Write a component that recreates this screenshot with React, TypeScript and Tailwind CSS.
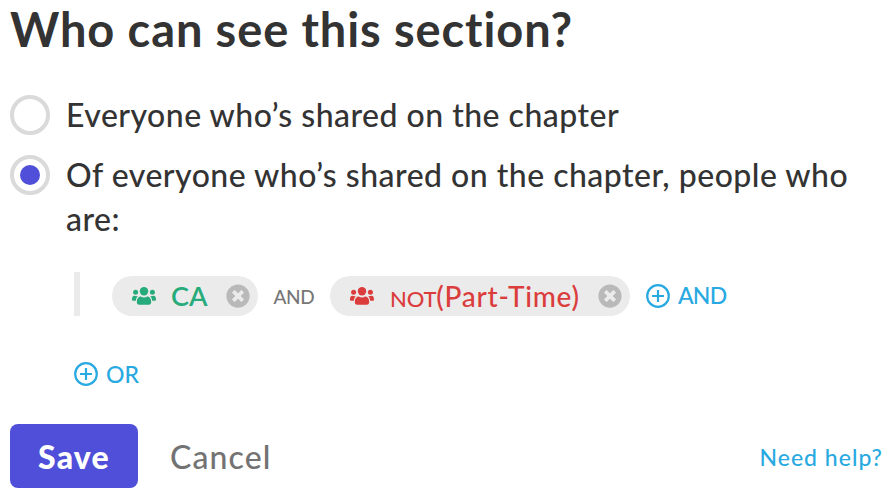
import { useState } from 'react'
import type { ReactNode } from 'react'
import { FaTimesCircle } from 'react-icons/fa'

function UsersIcon() {
  return (
    <svg viewBox="0 0 24 18" className="h-[18px] w-6 shrink-0" fill="currentColor">
      <circle cx="12" cy="4.3" r="4.2" />
      <circle cx="3.6" cy="5.3" r="2.5" />
      <circle cx="20.4" cy="5.3" r="2.5" />
      <path d="M4.8 14.8c0-3.3 1.7-5.3 4.1-5.3.9.6 1.9.9 3.1.9s2.200-.3 3.100-.9c2.400 0 4.100 2 4.100 5.300 0 1.900-.7 2.900-2.400 2.900H7.200c-1.700 0-2.400-1-2.400-2.900z" />
      <path d="M6 9.1c-1.2 1-2 2.600-2.200 4.700H1.300C.5 13.800 0 13.300 0 12.400 0 10.200.8 8.700 2.200 8.700c1.200.4 2.500.5 3.800.4z" />
      <path d="M18 9.1c1.200 1 2 2.600 2.200 4.700h2.500c.8 0 1.300-.5 1.300-1.400 0-2.200-.8-3.700-2.200-3.700-1.200.4-2.500.5-3.800.4z" />
    </svg>
  )
}

function PlusIcon() {
  return (
    <svg viewBox="0 0 24 24" className="size-6 shrink-0" fill="none" stroke="currentColor" strokeWidth="2.2">
      <circle cx="12" cy="12" r="10.8" />
      <path d="M12 6v12M6 12h12" />
    </svg>
  )
}

interface OptionProps {
  checked: boolean
  onSelect: () => void
  children: ReactNode
}

function Option({ checked, onSelect, children }: OptionProps) {
  return (
    <button role="radio" aria-checked={checked} onClick={onSelect} className="flex h-11 items-start gap-4 text-left">
      <span className="mt-0.5 flex size-10 shrink-0 items-center justify-center rounded-full border-4 border-[#dadada]">
        {checked && <span className="size-5 rounded-full bg-[#4f4fd9]" />}
      </span>
      <span className="text-[32px] leading-[44px] font-medium tracking-[0.48px] whitespace-nowrap">
        {children}
      </span>
    </button>
  )
}

export default function App() {
  const [scope, setScope] = useState<'everyone' | 'filtered'>('filtered')

  return (
    <div className="h-[496px] w-[892px] overflow-hidden bg-white px-2.5 font-['Lato',sans-serif] text-[#333]">
      <h1 className="h-[93px] text-[47px] leading-[58px] font-bold tracking-[0.9px] whitespace-nowrap">
        Who can see this section?
      </h1>

      <div role="radiogroup" className="flex h-[148px] flex-col items-start gap-4">
        <Option checked={scope === 'everyone'} onSelect={() => setScope('everyone')}>
          Everyone who’s shared on the chapter
        </Option>
        <Option checked={scope === 'filtered'} onSelect={() => setScope('filtered')}>
          Of everyone who’s shared on the chapter, people who
          <br />
          are:
        </Option>
      </div>

      {/* Rule group */}
      <div className="mt-[31px] ml-16 flex h-11 items-center border-l-6 border-[#ebebeb] pt-1 pl-8 whitespace-nowrap">
        <div className="flex h-10 w-[146px] items-center rounded-full bg-[#ebebeb] pl-5 text-[#27ab7a]">
          <UsersIcon />
          <span className="ml-[15px] text-[27px] leading-10 font-semibold">CA</span>
          <button aria-label="Remove CA" className="mr-2 ml-auto text-[#b9b9b9]">
            <FaTimesCircle className="size-6" />
          </button>
        </div>
        <span className="w-[72px] pt-0.5 text-center text-[19px] font-medium tracking-[-0.3px] text-[#777]">AND</span>
        <div className="flex h-10 w-[300px] items-center rounded-full bg-[#ebebeb] pl-5 text-[#db3d3d]">
          <UsersIcon />
          <span className="ml-4 pt-0.5 text-[28px] leading-10 font-medium tracking-[0.75px]">
            <span className="text-[22px] tracking-[-0.2px]">NOT</span>(Part-Time)
          </span>
          <button aria-label="Remove Part-Time" className="mr-2 ml-auto text-[#b9b9b9]">
            <FaTimesCircle className="size-6" />
          </button>
        </div>
        <button className="ml-4 flex items-center gap-2 text-[23px] leading-6 font-medium tracking-[-0.8px] text-[#29a9e1]">
          <PlusIcon />
          <span className="-mt-0.5">AND</span>
        </button>
      </div>

      <button className="mt-[46px] ml-16 flex items-center gap-2 text-[23px] leading-6 font-medium text-[#29a9e1]">
        <PlusIcon />
        <span className="-mt-px">OR</span>
      </button>

      {/* Actions */}
      <div className="mt-[38px] flex h-16 items-center">
        <button className="h-16 w-32 rounded-lg bg-[#4f4fd9] pt-0.5 text-[32px] font-black tracking-[1.2px] text-white">
          Save
        </button>
        <button className="ml-8 pt-0.5 text-[32px] font-medium tracking-[1.1px] text-[#737373]">Cancel</button>
        <a href="#" className="-mr-px ml-auto pt-0.5 text-[23px] font-medium tracking-[1px] text-[#29a9e1]">
          Need help?
        </a>
      </div>
    </div>
  )
}
